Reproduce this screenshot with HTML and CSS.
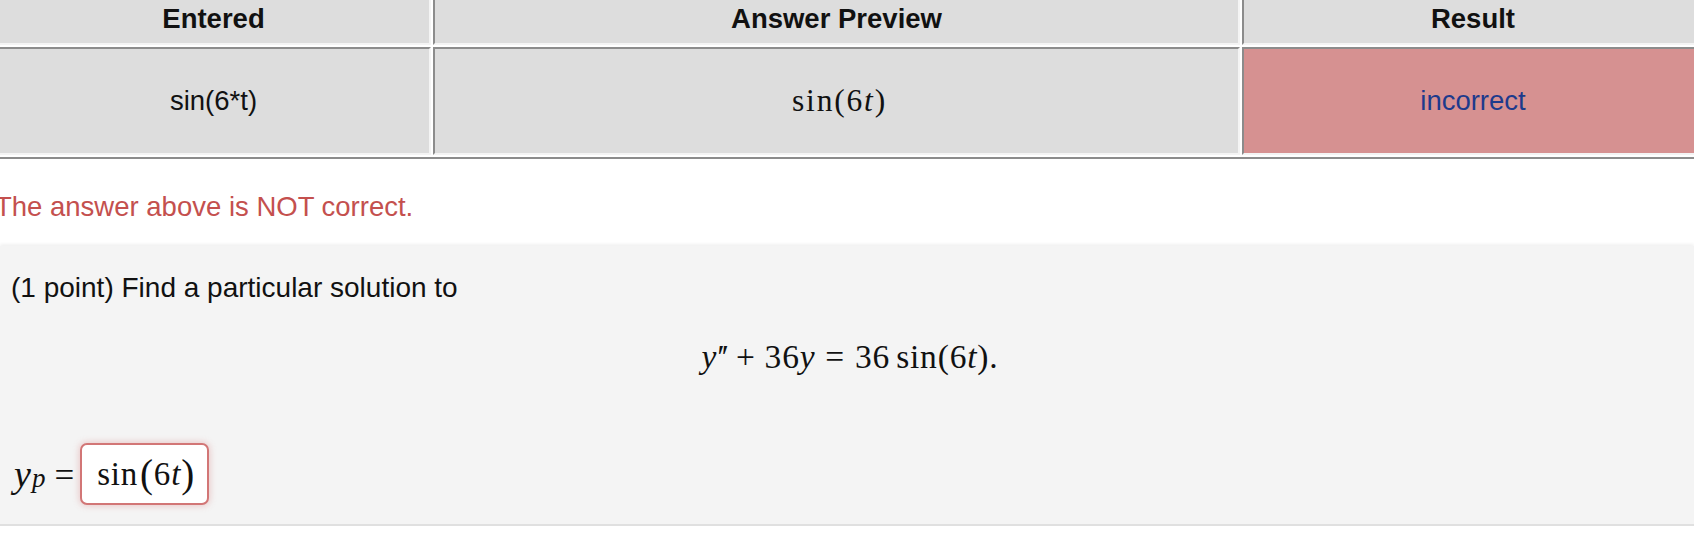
FILE: index.html
```html
<!DOCTYPE html>
<html>
<head>
<meta charset="utf-8">
<link rel="stylesheet" href="styles.css">
</head>
<body>
<table class="attempt">
  <tr>
    <th class="c1">Entered</th>
    <th class="c2">Answer Preview</th>
    <th class="c3">Result</th>
  </tr>
  <tr>
    <td class="c1">sin(6*t)</td>
    <td class="c2 math">sin(6<i>t</i>)</td>
    <td class="c3 bad">incorrect</td>
  </tr>
</table>
<div class="message">The answer above is NOT correct.</div>
<div class="problem">
  <p class="intro">(1 point) Find a particular solution to</p>
  <div class="equation"><i>y</i><span class="prime">′′</span><span class="op">+</span>36<i>y</i><span class="rel">=</span>36<span class="fn">sin</span>(6<i>t</i>).</div>
  <div class="answer-row">
    <span class="lhs"><i>y</i><sub>p</sub><span class="eq">=</span></span>
    <span class="answer-box"><span class="fn">sin</span><span class="bigp">(</span>6<i>t</i><span class="bigp">)</span></span>
  </div>
</div>
</body>
</html>
```
FILE: styles.css
```css
html, body {
  margin: 0;
  padding: 0;
  background: #ffffff;
  overflow: hidden;
}
body {
  width: 1694px;
  height: 538px;
  font-family: "Liberation Sans", Arial, sans-serif;
  font-size: 27.5px;
  color: #111111;
}
.attempt {
  margin: -6px 0 0 -8px;
  width: 1716px;
  table-layout: fixed;
  border-collapse: separate;
  border-spacing: 2px;
  border-style: solid;
  border-width: 2px;
  border-color: #ffffff #8c8c8c #8c8c8c #ffffff;
  background: #ffffff;
}
.attempt th, .attempt td {
  box-sizing: border-box;
  border-style: solid;
  border-width: 2px;
  border-color: #8c8c8c #f4f4f4 #f4f4f4 #8c8c8c;
  background: #dddddd;
  text-align: center;
  padding: 0;
  color: #111111;
}
.attempt th {
  font-weight: bold;
  line-height: 38px;
  padding-bottom: 5px;
}
.attempt td {
  line-height: 104px;
}
.c1 { width: 435px; }
.c2 { width: 807px; }
.c3 { width: 462px; }
.math {
  font-family: "Liberation Serif", "Times New Roman", serif;
  font-size: 31.5px;
  letter-spacing: 1.8px;
  padding-left: 6px !important;
}
.attempt td.bad {
  background: #d69191;
  color: #1d3a8c;
}
.message {
  margin-left: -5px;
  padding: 32px 0 23px;
  line-height: 32px;
  color: #c4504e;
}
.problem {
  background: #f4f4f4;
  border-bottom: 2px solid #e0e0e0;
  box-shadow: 0 -2px 3px rgba(0, 0, 0, 0.06);
  padding: 26px 0 19px;
}
.intro {
  margin: 0;
  padding-left: 11px;
  font-size: 28px;
  line-height: 32px;
}
.equation {
  margin-top: 33px;
  text-align: center;
  font-family: "Liberation Serif", "Times New Roman", serif;
  font-size: 33.5px;
  line-height: 40px;
  letter-spacing: 0.8px;
  padding-left: 6px;
}
.prime {
  font-style: italic;
  letter-spacing: -3px;
  margin-left: -2px;
}
.op { margin: 0 9px 0 12px; }
.rel { margin: 0 10px; }
.fn { margin-left: 6px; }
.answer-row {
  margin-top: 66px;
  display: flex;
  align-items: center;
  padding-left: 14px;
  font-family: "Liberation Serif", "Times New Roman", serif;
  font-size: 33px;
}
.lhs {
  display: inline-flex;
  align-items: baseline;
  font-size: 38px;
}
.lhs i {
  margin-right: 1px;
}
.lhs sub {
  font-style: italic;
  font-size: 27px;
  vertical-align: -8px;
  line-height: 0;
}
.eq {
  margin: 0 6px 0 9px;
  font-size: 35px;
}
.answer-box {
  box-sizing: border-box;
  display: inline-block;
  width: 129px;
  height: 62px;
  line-height: 58px;
  border: 2px solid #d27676;
  border-radius: 7px;
  background: #ffffff;
  box-shadow: 0 0 6px 1px rgba(214, 120, 120, 0.35);
  padding-left: 15px;
  letter-spacing: 0.8px;
}
.answer-box .fn { margin-left: 0; margin-right: 2px; }
.bigp {
  font-size: 39px;
  vertical-align: -2px;
}
```
